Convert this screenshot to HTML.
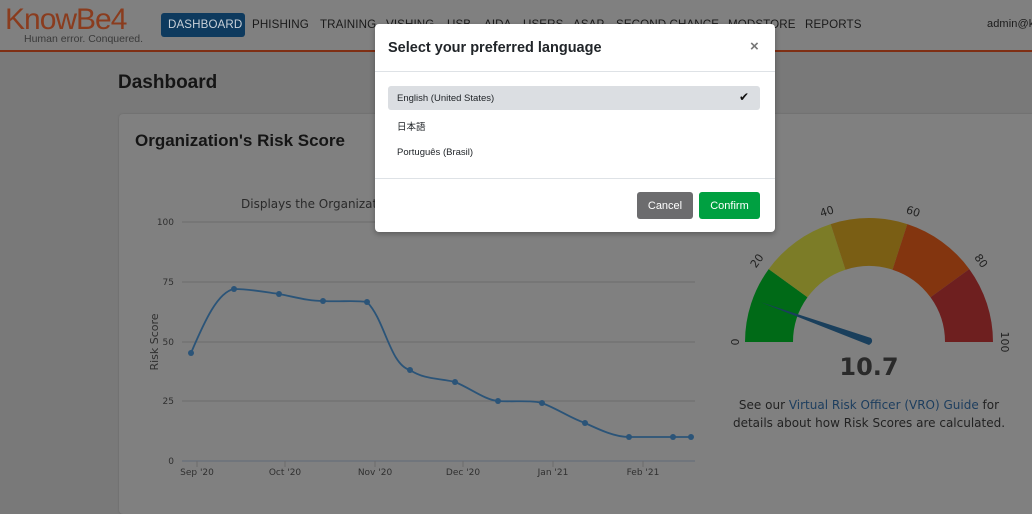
<!DOCTYPE html>
<html><head><meta charset="utf-8"><style>
*{margin:0;padding:0;box-sizing:border-box}
body{width:1032px;height:499px;overflow:hidden;background:#797979;font-family:"Liberation Sans","DejaVu Sans",sans-serif;position:relative}
.nav{position:absolute;left:0;top:0;width:1032px;height:52px;background:#808080;border-bottom:2px solid #7f2f14}
.nav span{position:absolute;top:18px;font-size:11.6px;color:#1a1a1a;letter-spacing:.1px}
.abs{position:absolute}
.card{position:absolute;left:119px;top:114px;width:930px;height:400px;background:#808080;border-radius:4px;box-shadow:0 0 2px rgba(0,0,0,.15)}
.modal{position:absolute;left:375px;top:24px;width:400px;height:208px;background:#fff;border-radius:4px;box-shadow:0 2px 6px rgba(0,0,0,.3)}
.modal .t{position:absolute;left:13px;top:16px;font-size:14.5px;font-weight:bold;color:#212529}
.lang{position:absolute;left:22px;font-size:9.5px;color:#212529}
.btn{position:absolute;top:168px;height:27px;border-radius:3px;color:#fff;font-size:11px;text-align:center;line-height:29px}
</style></head><body>
<div class="nav">
 <div class="abs" style="left:5px;top:3px;font-size:30px;color:#8a3c1e;letter-spacing:-1px">KnowBe4</div>
 <div class="abs" style="left:24px;top:33px;font-size:10.5px;color:#3a3a3a">Human error. Conquered.</div>
 <div class="abs" style="left:161px;top:13px;width:84px;height:24px;background:#0e3a5e;border-radius:3px"></div>
 <span style="left:168px;color:#c8d0d8">DASHBOARD</span>
 <span style="left:252px">PHISHING</span>
 <span style="left:320px">TRAINING</span>
 <span style="left:386px">VISHING</span>
 <span style="left:447px">USB</span>
 <span style="left:484px">AIDA</span>
 <span style="left:523px">USERS</span>
 <span style="left:573px">ASAP</span>
 <span style="left:616px">SECOND CHANCE</span>
 <span style="left:728px">MODSTORE</span>
 <span style="left:805px">REPORTS</span>
 <span style="left:987px;font-size:11px">admin@kb</span>
</div>
<div class="abs" style="left:118px;top:72px;font-size:19px;font-weight:bold;color:#151515">Dashboard</div>
<div class="card">
 <div class="abs" style="left:16px;top:17px;font-size:17px;font-weight:bold;color:#151515">Organization's Risk Score</div>
</div>
<svg class="abs" style="left:0;top:0" width="1032" height="499">
 <g font-family="DejaVu Sans,sans-serif" font-size="9" fill="#2f2f2f">
 <text x="241" y="208" font-size="12" fill="#2a2a2a">Displays the Organization's Risk Score over time</text>
 <g stroke="#6c6c6c" stroke-width="1">
  <line x1="182" y1="222" x2="695" y2="222"/><line x1="182" y1="282" x2="695" y2="282"/>
  <line x1="182" y1="342" x2="695" y2="342"/><line x1="182" y1="401" x2="695" y2="401"/>
  <line x1="182" y1="461" x2="695" y2="461" stroke="#5f6a78"/>
  <line x1="197" y1="461" x2="197" y2="467"/><line x1="285" y1="461" x2="285" y2="467"/><line x1="375" y1="461" x2="375" y2="467"/><line x1="463" y1="461" x2="463" y2="467"/><line x1="553" y1="461" x2="553" y2="467"/><line x1="643" y1="461" x2="643" y2="467"/>
 </g>
 <text x="174" y="225" text-anchor="end">100</text><text x="174" y="285" text-anchor="end">75</text><text x="174" y="345" text-anchor="end">50</text><text x="174" y="404" text-anchor="end">25</text><text x="174" y="464" text-anchor="end">0</text>
 <text x="197" y="475" text-anchor="middle">Sep '20</text><text x="285" y="475" text-anchor="middle">Oct '20</text><text x="375" y="475" text-anchor="middle">Nov '20</text><text x="463" y="475" text-anchor="middle">Dec '20</text><text x="553" y="475" text-anchor="middle">Jan '21</text><text x="643" y="475" text-anchor="middle">Feb '21</text>
 <text transform="translate(158,342) rotate(-90)" text-anchor="middle" font-size="11">Risk Score</text>
 </g>
 <path d="M191,353 C205,320 218,292 234,289 C250,289 265,292 279,294 C295,297 308,301 323,301 C340,302 355,300 367,302 C385,320 390,365 410,370 C425,380 440,378 455,382 C470,388 485,400 498,401 C515,402 530,400 542,403 C560,410 570,418 585,423 C600,430 615,437 629,437 L691,437" fill="none" stroke="#2b5478" stroke-width="1.8"/>
 <g fill="#2b5478">
  <circle cx="191" cy="353" r="3"/><circle cx="234" cy="289" r="3"/><circle cx="279" cy="294" r="3"/><circle cx="323" cy="301" r="3"/><circle cx="367" cy="302" r="3"/><circle cx="410" cy="370" r="3"/><circle cx="455" cy="382" r="3"/><circle cx="498" cy="401" r="3"/><circle cx="542" cy="403" r="3"/><circle cx="585" cy="423" r="3"/><circle cx="629" cy="437" r="3"/><circle cx="673" cy="437" r="3"/><circle cx="691" cy="437" r="3"/>
 </g>
 <g>
  <path d="M745,342 A124,124 0 0 1 768.7,269.1 L807.5,297.3 A76,76 0 0 0 793,342Z" fill="#006a17"/>
  <path d="M768.7,269.1 A124,124 0 0 1 830.7,224.1 L845.5,269.7 A76,76 0 0 0 807.5,297.3Z" fill="#7c7c27"/>
  <path d="M830.7,224.1 A124,124 0 0 1 907.3,224.1 L892.5,269.7 A76,76 0 0 0 845.5,269.7Z" fill="#7a5e14"/>
  <path d="M907.3,224.1 A124,124 0 0 1 969.3,269.1 L930.5,297.3 A76,76 0 0 0 892.5,269.7Z" fill="#83350f"/>
  <path d="M969.3,269.1 A124,124 0 0 1 993,342 L945,342 A76,76 0 0 0 930.5,297.3Z" fill="#6e1f1f"/>
  <path d="M760,302 L871,338 Q874,342 869,345 Z" fill="#1a3f5c"/>
 </g>
 <g font-family="DejaVu Sans,sans-serif" font-size="11" fill="#222">
  <text transform="translate(731,342) rotate(90)" text-anchor="middle">0</text>
  <text transform="translate(760,263) rotate(-54)" text-anchor="middle">20</text>
  <text transform="translate(828,215) rotate(-18)" text-anchor="middle">40</text>
  <text transform="translate(912,215) rotate(18)" text-anchor="middle">60</text>
  <text transform="translate(978,263) rotate(54)" text-anchor="middle">80</text>
  <text transform="translate(1001,342) rotate(90)" text-anchor="middle">100</text>
  <text x="869" y="375" font-size="24" font-weight="bold" text-anchor="middle" fill="#2a2a2a">10.7</text>
  <text x="869" y="409" font-size="12" text-anchor="middle">See our <tspan fill="#1c3d5e">Virtual Risk Officer (VRO) Guide</tspan> for</text>
  <text x="869" y="427" font-size="12" text-anchor="middle">details about how Risk Scores are calculated.</text>
 </g>
</svg>
<div class="modal">
 <div class="t">Select your preferred language</div>
 <div class="abs" style="left:375px;top:14px;font-size:15px;color:#777;font-weight:bold">×</div>
 <div class="abs" style="left:0;top:47px;width:400px;height:1px;background:#dee2e6"></div>
 <div class="abs" style="left:13px;top:62px;width:372px;height:24px;background:#dbdee2;border-radius:3px"></div>
 <div class="lang" style="top:69px">English (United States)</div>
 <div class="abs" style="left:364px;top:66px;font-size:12px;color:#111">✔</div>
 <div class="lang" style="top:95px;font-family:'Liberation Sans','Noto Sans CJK JP',sans-serif">日本語</div>
 <div class="lang" style="top:123px">Português (Brasil)</div>
 <div class="abs" style="left:0;top:154px;width:400px;height:1px;background:#dee2e6"></div>
 <div class="btn" style="left:262px;width:56px;background:#6c6c6e">Cancel</div>
 <div class="btn" style="left:324px;width:61px;background:#00a041">Confirm</div>
</div>
</body></html>
